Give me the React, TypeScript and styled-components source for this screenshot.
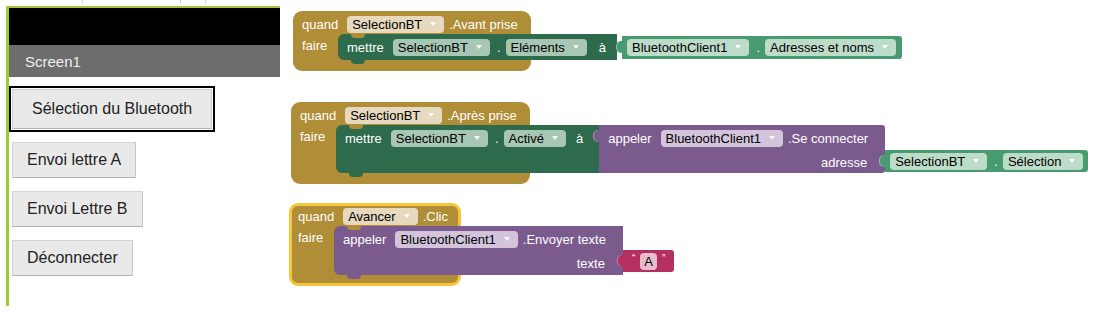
import React from "react";
import styled, { createGlobalStyle } from "styled-components";

const GlobalStyle = createGlobalStyle`
  html, body { margin: 0; padding: 0; background: #fff; }
  body { font-family: "Liberation Sans", Arial, sans-serif; }
`;

const GOLD = "#b08d37";
const SET_GREEN = "#2e6b4c";
const GET_GREEN = "#489b70";
const PURPLE = "#7b5a8e";
const PINK = "#b42f62";

const TINT = {
  gold: "#e6d9be",
  set: "#a7c6b4",
  get: "#bcdcc9",
  purple: "#d3c4dc",
  pink: "#e8bccc",
};

const Page = styled.div`
  display: flex;
  align-items: flex-start;
  width: 1108px;
  height: 322px;
  overflow: hidden;
`;

/* ---------- designer (phone preview) ---------- */

const Designer = styled.section`
  flex: none;
  width: 274px;
  margin-left: 6px;
  display: flex;
  flex-direction: column;
`;

const Ruler = styled.div`
  display: flex;
  height: 6px;
`;

const Tick = styled.span<{ $gap: number }>`
  flex: none;
  width: 1px;
  height: 3px;
  margin-left: ${(p) => p.$gap}px;
  background: #c9c9c9;
`;

const Phone = styled.div`
  height: 298px;
  border-left: 3px solid #9fc93c;
  border-top: 2px solid #9fc93c;
  display: flex;
  flex-direction: column;
`;

const StatusBar = styled.div`
  height: 37px;
  background: #000;
`;

const TitleBar = styled.div`
  height: 32px;
  background: #6d6d6d;
  color: #efefef;
  font-size: 15px;
  display: flex;
  align-items: center;
  padding-left: 16px;
`;

const ButtonList = styled.div`
  display: flex;
  flex-direction: column;
  align-items: flex-start;
  gap: 13px;
  padding-top: 9px;
`;

const FocusRing = styled.div`
  display: flex;
  border: 2px solid #000;
  padding: 1px;
  margin-bottom: -3px;
`;

const AppButton = styled.button<{ $big?: boolean }>`
  box-sizing: border-box;
  height: ${(p) => (p.$big ? 40 : 36)}px;
  padding: 0 ${(p) => (p.$big ? 19 : 14)}px;
  margin: 0 0 0 ${(p) => (p.$big ? 0 : 3)}px;
  background: #e9e9e9;
  border: 1px solid #d4d4d4;
  border-right-color: #c6c6c6;
  border-bottom-color: #b3b3b3;
  border-radius: 0;
  font-family: "Liberation Sans", Arial, sans-serif;
  font-size: 16px;
  color: #222;
`;

/* ---------- blocks workspace ---------- */

const Workspace = styled.main`
  position: relative;
  flex: 1;
  height: 322px;
`;

const Placed = styled.div<{ $x: number; $y: number }>`
  position: absolute;
  left: ${(p) => p.$x}px;
  top: ${(p) => p.$y}px;
`;

const Event = styled.div<{ $selected?: boolean }>`
  display: inline-flex;
  flex-direction: column;
  background: ${GOLD};
  border: 3px solid ${(p) => (p.$selected ? "#f5c53a" : "transparent")};
  border-radius: 9px;
  font-size: 13px;
  color: #fff;
`;

const EventHead = styled.div`
  display: flex;
  align-items: center;
  gap: 5px;
  height: 20px;
  padding: 0 10px 0 6px;
  white-space: nowrap;
`;

const DoRow = styled.div`
  display: flex;
`;

const DoLabel = styled.div`
  box-sizing: border-box;
  flex: none;
  width: 42px;
  padding: 4px 0 0 6px;
  line-height: 16px;
`;

const Slot = styled.div`
  flex: 1 0 0;
  width: 0;
  min-width: 0;
  display: flex;
`;

const EventFoot = styled.div`
  height: 8px;
`;

const Plug = styled.div<{ $align: string }>`
  flex: none;
  display: flex;
  align-items: ${(p) => p.$align};
`;

const Block = styled.div<{
  $bg: string;
  $kind: "stmt" | "value";
  $gap?: number;
  $mb?: number;
}>`
  position: relative;
  flex: none;
  display: flex;
  flex-direction: column;
  background: ${(p) => p.$bg};
  margin-left: ${(p) => p.$gap ?? 0}px;
  margin-bottom: ${(p) => p.$mb ?? 0}px;
  border-radius: ${(p) => (p.$kind === "stmt" ? "6px 0 0 6px" : "0 3px 3px 0")};
  font-size: 13px;
  color: #fff;

  ${(p) =>
    p.$kind === "stmt"
      ? `
    &::before {
      content: "";
      position: absolute;
      top: 0;
      left: 13px;
      width: 14px;
      height: 4px;
      background: ${GOLD};
      border-radius: 0 0 5px 5px;
    }
    &::after {
      content: "";
      position: absolute;
      bottom: -4px;
      left: 13px;
      width: 14px;
      height: 4px;
      background: inherit;
      border-radius: 0 0 5px 5px;
    }`
      : `
    &::before {
      content: "";
      position: absolute;
      top: 5px;
      left: -6px;
      width: 6px;
      height: 12px;
      background: inherit;
      border-radius: 5px 0 0 5px;
      box-shadow: inset 1px 0 0 rgba(255, 255, 255, 0.35);
    }`}
`;

const Line = styled.div<{ $h: number; $pl?: number; $pr?: number; $end?: boolean }>`
  display: flex;
  align-items: center;
  justify-content: ${(p) => (p.$end ? "flex-end" : "flex-start")};
  gap: 5px;
  height: ${(p) => p.$h}px;
  padding: 0 ${(p) => p.$pr ?? 11}px 0 ${(p) => p.$pl ?? 9}px;
  white-space: nowrap;
`;

const Label = styled.span<{ $ml?: number }>`
  color: #fff;
  margin-left: ${(p) => p.$ml ?? 0}px;
`;

const Dot = styled.span`
  color: #fff;
  margin: 0 -4px 0 2px;
`;

const Quote = styled.span<{ $mr?: number }>`
  align-self: flex-start;
  margin: 3px ${(p) => p.$mr ?? 0}px 0 0;
  font-size: 10px;
  color: #fff;
`;

const Chip = styled.span<{ $tint: string; $drop?: boolean }>`
  display: inline-flex;
  align-items: center;
  height: 17px;
  margin-left: 4px;
  padding: 0 ${(p) => (p.$drop ? 8 : 4)}px 0 ${(p) => (p.$drop ? 5 : 4)}px;
  border-radius: 4px;
  background: ${(p) => p.$tint};
  color: #000;
`;

const Caret = styled.span`
  width: 0;
  height: 0;
  margin-left: 8px;
  border-left: 3px solid transparent;
  border-right: 3px solid transparent;
  border-top: 4px solid rgba(255, 255, 255, 0.9);
`;

function Field({ tint, children }: { tint: string; children: React.ReactNode }) {
  return (
    <Chip $tint={tint} $drop>
      {children}
      <Caret />
    </Chip>
  );
}

export default function App() {
  return (
    <>
      <GlobalStyle />
      <Page>
        <Designer>
          <Ruler>
            <Tick $gap={76} />
            <Tick $gap={97} />
            <Tick $gap={24} />
          </Ruler>
          <Phone>
            <StatusBar />
            <TitleBar>Screen1</TitleBar>
            <ButtonList>
              <FocusRing>
                <AppButton $big>Sélection du Bluetooth</AppButton>
              </FocusRing>
              <AppButton>Envoi lettre A</AppButton>
              <AppButton>Envoi Lettre B</AppButton>
              <AppButton>Déconnecter</AppButton>
            </ButtonList>
          </Phone>
        </Designer>

        <Workspace>
          {/* quand SelectionBT.Avant prise */}
          <Placed $x={13} $y={11}>
            <Event>
              <EventHead>
                <Label>quand</Label>
                <Field tint={TINT.gold}>SelectionBT</Field>
                <Label>.Avant prise</Label>
              </EventHead>
              <DoRow>
                <DoLabel>faire</DoLabel>
                <Slot>
                  <Plug $align="center">
                    <Block $bg={SET_GREEN} $kind="stmt">
                      <Line $h={26} $pr={11}>
                        <Label>mettre</Label>
                        <Field tint={TINT.set}>SelectionBT</Field>
                        <Dot>.</Dot>
                        <Field tint={TINT.set}>Eléments</Field>
                        <Label $ml={7}>à</Label>
                      </Line>
                    </Block>
                    <Block $bg={GET_GREEN} $kind="value" $gap={5}>
                      <Line $h={23} $pl={1} $pr={6}>
                        <Field tint={TINT.get}>BluetoothClient1</Field>
                        <Dot>.</Dot>
                        <Field tint={TINT.get}>Adresses et noms</Field>
                      </Line>
                    </Block>
                  </Plug>
                </Slot>
              </DoRow>
              <EventFoot />
            </Event>
          </Placed>

          {/* quand SelectionBT.Après prise */}
          <Placed $x={11} $y={102}>
            <Event>
              <EventHead>
                <Label>quand</Label>
                <Field tint={TINT.gold}>SelectionBT</Field>
                <Label>.Après prise</Label>
              </EventHead>
              <DoRow>
                <DoLabel>faire</DoLabel>
                <Slot>
                  <Plug $align="stretch">
                    <Block $bg={SET_GREEN} $kind="stmt">
                      <Line $h={26} $pr={16}>
                        <Label>mettre</Label>
                        <Field tint={TINT.set}>SelectionBT</Field>
                        <Dot>.</Dot>
                        <Field tint={TINT.set}>Activé</Field>
                        <Label $ml={5}>à</Label>
                      </Line>
                    </Block>
                    <Plug $align="flex-end">
                      <Block $bg={PURPLE} $kind="value">
                        <Line $h={26} $pr={17}>
                          <Label>appeler</Label>
                          <Field tint={TINT.purple}>BluetoothClient1</Field>
                          <Label>.Se connecter</Label>
                        </Line>
                        <Line $h={22} $pr={18} $end>
                          <Label>adresse</Label>
                        </Line>
                      </Block>
                      <Block $bg={GET_GREEN} $kind="value" $mb={1}>
                        <Line $h={22} $pl={1} $pr={5}>
                          <Field tint={TINT.get}>SelectionBT</Field>
                          <Dot>.</Dot>
                          <Field tint={TINT.get}>Sélection</Field>
                        </Line>
                      </Block>
                    </Plug>
                  </Plug>
                </Slot>
              </DoRow>
              <EventFoot />
            </Event>
          </Placed>

          {/* quand Avancer.Clic (selected) */}
          <Placed $x={9} $y={203}>
            <Event $selected>
              <EventHead>
                <Label>quand</Label>
                <Field tint={TINT.gold}>Avancer</Field>
                <Label>.Clic</Label>
              </EventHead>
              <DoRow>
                <DoLabel>faire</DoLabel>
                <Slot>
                  <Plug $align="flex-end">
                    <Block $bg={PURPLE} $kind="stmt">
                      <Line $h={26} $pr={17}>
                        <Label>appeler</Label>
                        <Field tint={TINT.purple}>BluetoothClient1</Field>
                        <Label>.Envoyer texte</Label>
                      </Line>
                      <Line $h={23} $pr={18} $end>
                        <Label>texte</Label>
                      </Line>
                    </Block>
                    <Block $bg={PINK} $kind="value" $mb={3}>
                      <Line $h={22} $pl={9} $pr={9}>
                        <Quote $mr={-4}>“</Quote>
                        <Chip $tint={TINT.pink}>A</Chip>
                        <Quote>”</Quote>
                      </Line>
                    </Block>
                  </Plug>
                </Slot>
              </DoRow>
              <EventFoot />
            </Event>
          </Placed>
        </Workspace>
      </Page>
    </>
  );
}
